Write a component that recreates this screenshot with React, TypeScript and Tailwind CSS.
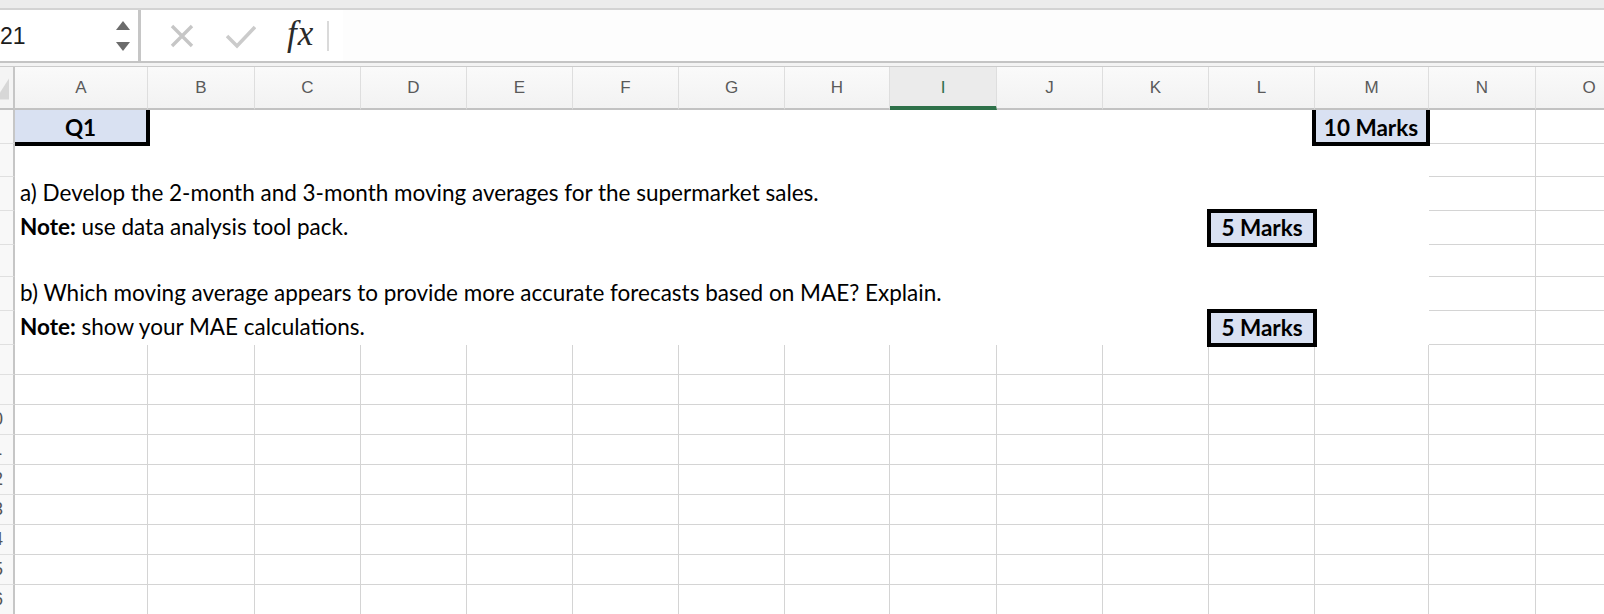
import React from 'react';

const COLS = ['A', 'B', 'C', 'D', 'E', 'F', 'G', 'H', 'I', 'J', 'K', 'L', 'M', 'N', 'O'];
const ROWS = Array.from({ length: 17 }, (_, i) => i + 1);
const SELECTED_COL = 'I';

const cellFont = "[font-family:Lato,'Noto_Sans',sans-serif]";
const uiFont = "[font-family:'Liberation_Sans',Arial,sans-serif]";

const isFilled = (row: number, col: number) => row <= 7 && col <= 12;

const Note: React.FC<{ children: React.ReactNode }> = ({ children }) => (
  <span>
    <b className="font-bold">Note:</b> {children}
  </span>
);

const TEXT: Record<string, React.ReactNode> = {
  '3-0': 'a) Develop the 2-month and 3-month moving averages for the supermarket sales.',
  '4-0': <Note>use data analysis tool pack.</Note>,
  '6-0': 'b) Which moving average appears to provide more accurate forecasts based on MAE? Explain.',
  '7-0': <Note>show your MAE calculations.</Note>,
};

const MarksBox: React.FC<{ label: string }> = ({ label }) => (
  <div className="relative z-10 -m-[2px] h-[calc(100%+4px)] bg-[#d9e1f2] border-4 border-black flex items-center justify-center font-bold text-[22.5px] leading-none pt-[1px]">
    {label}
  </div>
);

function renderCell(row: number, col: number) {
  const key = `${row}-${col}`;
  if (row === 1 && col === 0) {
    return (
      <div className="relative z-10 -mr-[2px] h-[calc(100%+2px)] bg-[#d9e1f2] border-r-4 border-b-4 border-black flex items-end justify-center pb-[3px] font-bold text-[22.5px] leading-none">
        Q1
      </div>
    );
  }
  if (row === 1 && col === 12) {
    return (
      <div className="relative z-10 -ml-[3px] -mr-[1px] h-[calc(100%+2px)] bg-[#d9e1f2] border-x-4 border-b-4 border-black flex items-end justify-center pb-[3px] font-bold text-[22.5px] leading-none">
        10 Marks
      </div>
    );
  }
  if ((row === 4 || row === 7) && col === 11) return <MarksBox label="5 Marks" />;
  const text = TEXT[key];
  if (text) {
    return (
      <div className="h-full flex items-end pl-[5px] pb-[7px] whitespace-nowrap text-[22.5px] leading-none text-black">
        {text}
      </div>
    );
  }
  return null;
}

const FormulaBar: React.FC = () => (
  <div>
    <div className="h-[10px] bg-[#ececec] border-b-2 border-[#d3d3d3]" />
    <div className="flex h-[53px] border-b-2 border-[#c4c4c4] bg-white">
      <div className={`w-[141px] shrink-0 flex items-center justify-between border-r-[3px] border-[#c6c6c6] pr-[8px] ${uiFont}`}>
        <span className="text-[23px] text-[#1c1c1c] leading-none pt-[2px]">21</span>
        <svg width="14" height="32" viewBox="0 0 14 32" className="mt-[2px]">
          <polygon points="7,0 14,9 0,9" fill="#6b6b6b" />
          <polygon points="0,21 14,21 7,30" fill="#6b6b6b" />
        </svg>
      </div>
      <div className="flex items-center pl-[29px]">
        <svg width="24" height="24" viewBox="0 0 24 24">
          <path d="M2 2 L22 22 M22 2 L2 22" stroke="#c6c6c6" strokeWidth="3.4" strokeLinecap="butt" />
        </svg>
        <svg width="30" height="24" viewBox="0 0 30 24" className="ml-[32px] mt-[2px]">
          <path d="M1 11 L11 21 L29 2" stroke="#cbcbcb" strokeWidth="3.6" fill="none" />
        </svg>
        <span className="ml-[31px] italic text-[35px] leading-none text-[#2a2a2a] [font-family:'Liberation_Serif','Times_New_Roman',serif] -mt-[4px] tracking-[1px]">
          fx
        </span>
        <div className="ml-[13px] w-[2px] h-[30px] bg-[#dadada]" />
      </div>
      <div className="flex-1 ml-[14px] bg-[#fdfdfd]" />
    </div>
    <div className="h-[4px] bg-[#f3f3f3] border-b border-[#cbcbcb]" />
  </div>
);

export default function App() {
  return (
    <div className="w-full h-screen overflow-hidden bg-white">
      <FormulaBar />
      <div className="grid grid-cols-[15px_133px_107px_106px_106px_106px_106px_106px_105px_107px_106px_106px_106px_114px_107px_107px] grid-rows-[43px_34px_33px_34px_34px_32px_34px_34px_30px_30px_30px_30px_30px_30px_30px_30px_30px_30px] w-max">
        {/* corner */}
        <div className="bg-[#f4f4f4] border-r-2 border-b-2 border-r-[#c6c6c6] border-b-[#c2c2c2] flex items-end justify-end pb-[5px] pr-[4px] overflow-hidden">
          <svg width="12" height="28" viewBox="0 0 12 28">
            <polygon points="12,0 12,28 -6,28" fill="#d7d7d7" />
          </svg>
        </div>
        {/* column headers */}
        {COLS.map(c => {
          const sel = c === SELECTED_COL;
          return (
            <div
              key={c}
              className={`flex items-center justify-center text-[17px] border-r border-r-[#dedede] ${uiFont} ${
                sel
                  ? 'bg-[#ebebeb] border-b-4 border-b-[#2e7149] text-[#2e7149] pt-[2px]'
                  : 'bg-gradient-to-b from-[#fafafa] to-[#f2f2f2] border-b-2 border-b-[#c2c2c2] text-[#5a5a5a]'
              }`}
            >
              {c}
            </div>
          );
        })}
        {/* rows */}
        {ROWS.map(r => (
          <React.Fragment key={r}>
            <div className="bg-[#f8f8f8] border-r-2 border-r-[#c6c6c6] border-b border-b-[#e0e0e0] overflow-hidden">
              <div className={`w-[40px] -ml-[27px] h-full flex items-center justify-center text-[18px] text-[#555] ${uiFont}`}>
                {r}
              </div>
            </div>
            {COLS.map((c, ci) => {
              const filled = isFilled(r, ci);
              return (
                <div
                  key={c}
                  className={`${cellFont} ${filled ? '' : 'border-r border-b border-[#d4d4d4]'}`}
                >
                  {renderCell(r, ci)}
                </div>
              );
            })}
          </React.Fragment>
        ))}
      </div>
    </div>
  );
}
